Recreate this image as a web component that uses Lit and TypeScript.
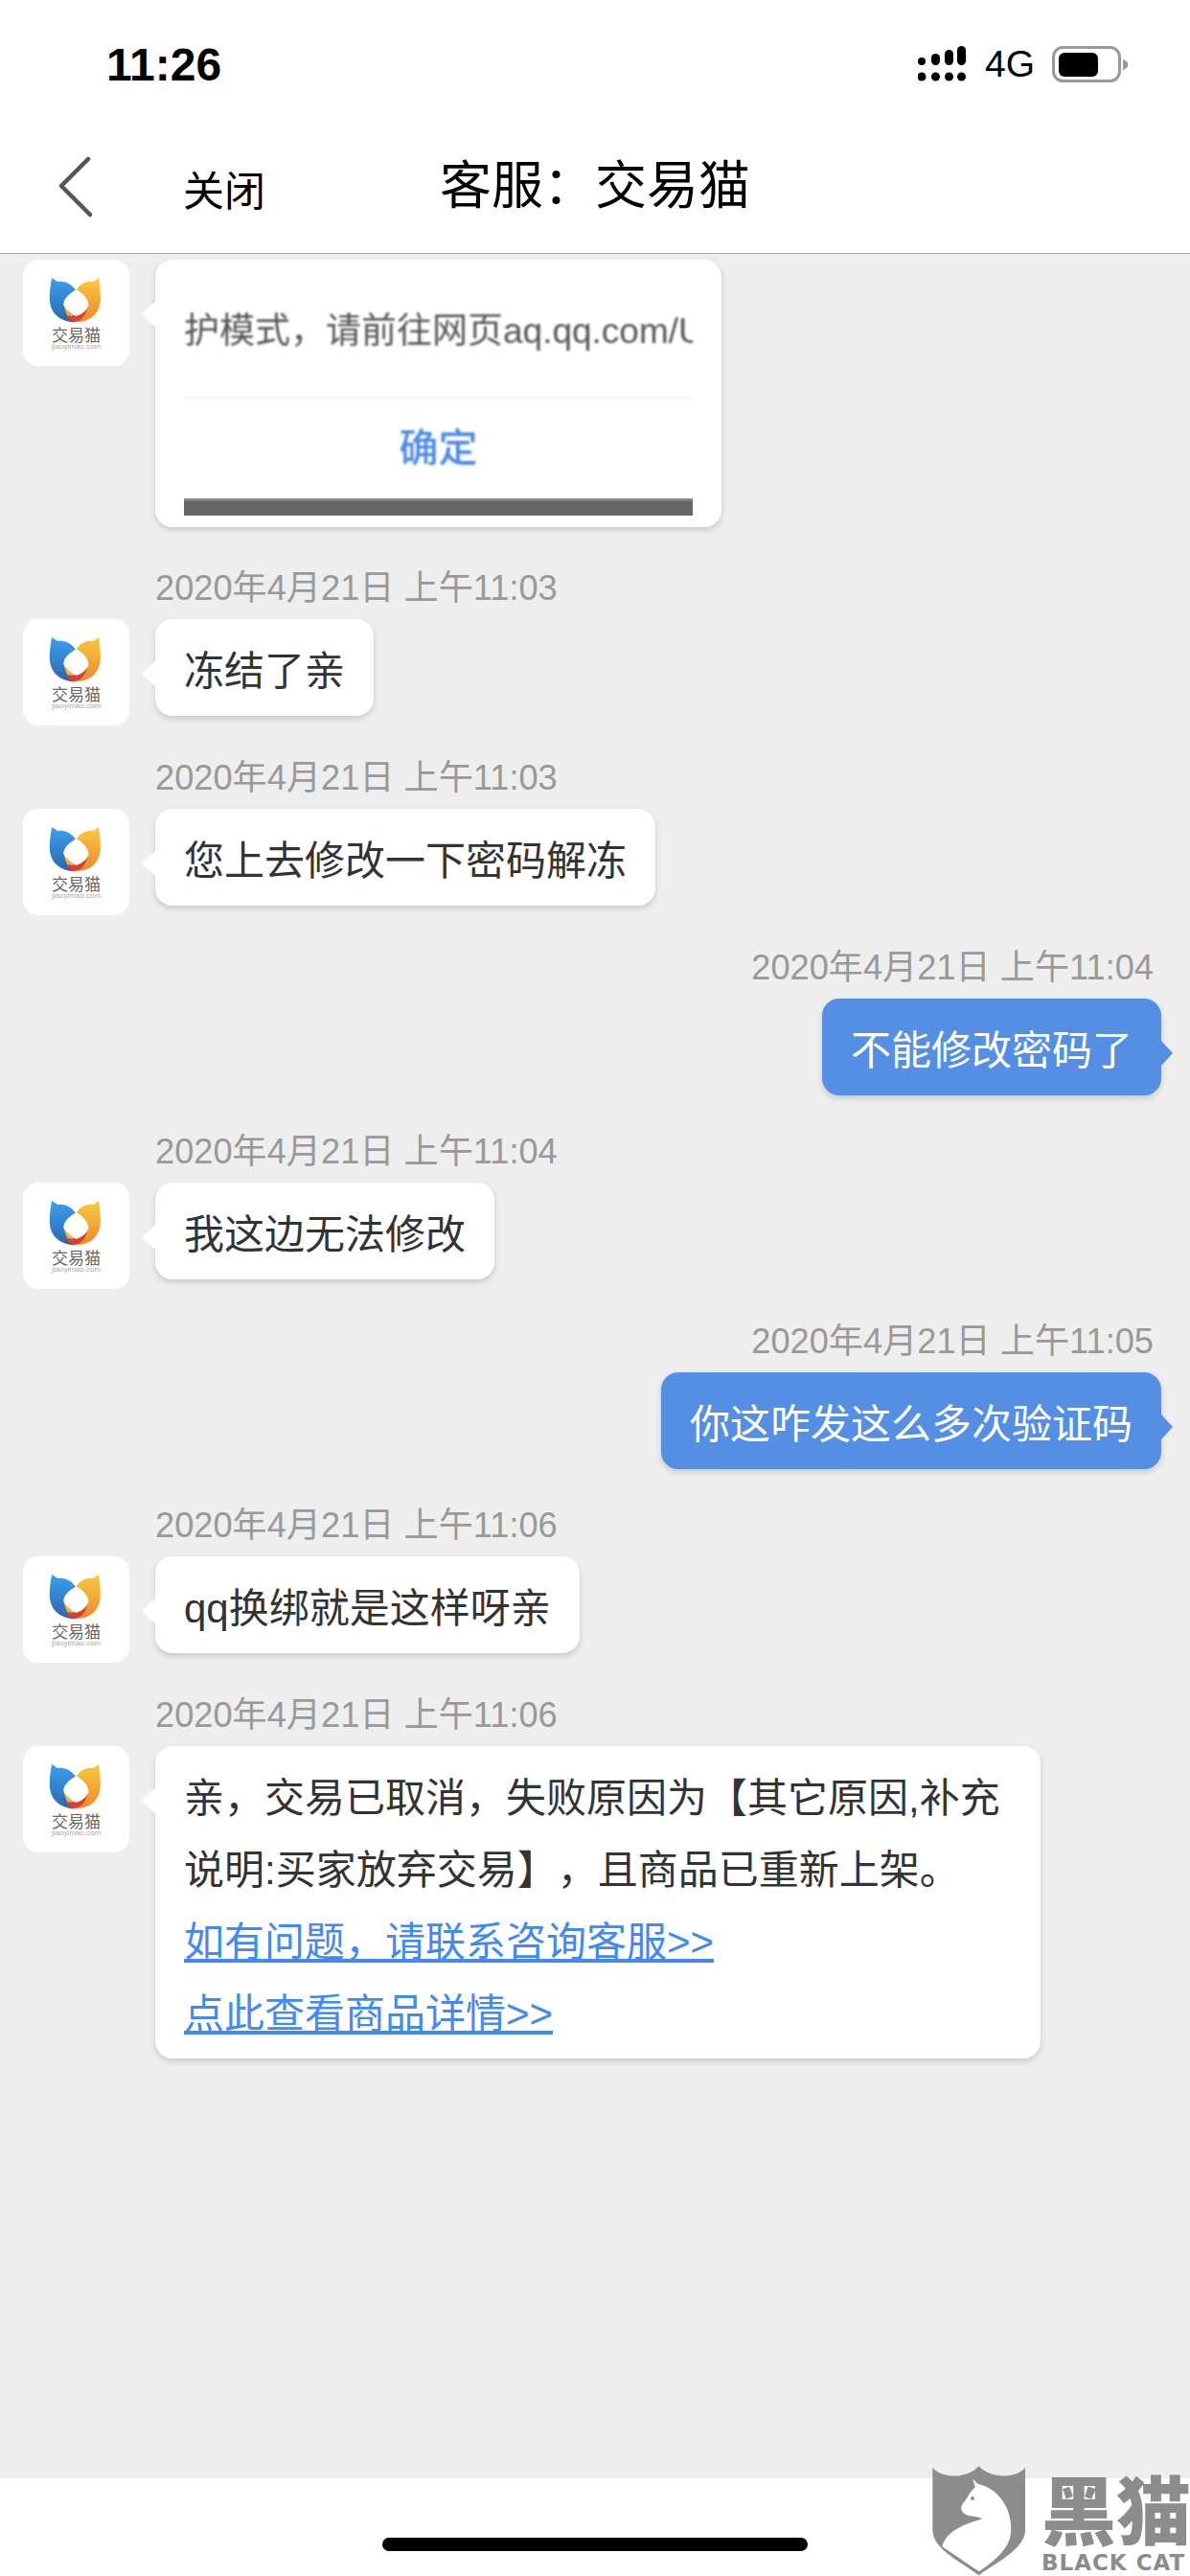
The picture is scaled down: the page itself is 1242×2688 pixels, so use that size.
import { LitElement, css, html } from "lit"
import { customElement } from "lit/decorators.js"

type Msg = { time: string; text: string; mine?: boolean }

const messages: Msg[] = [
  { time: "2020年4月21日 上午11:03", text: "冻结了亲" },
  { time: "2020年4月21日 上午11:03", text: "您上去修改一下密码解冻" },
  { time: "2020年4月21日 上午11:04", text: "不能修改密码了", mine: true },
  { time: "2020年4月21日 上午11:04", text: "我这边无法修改" },
  { time: "2020年4月21日 上午11:05", text: "你这咋发这么多次验证码", mine: true },
  { time: "2020年4月21日 上午11:06", text: "qq换绑就是这样呀亲" },
]

const avatar = html`
  <div class="avatar">
    <svg class="logo" viewBox="0 0 240 172">
      <defs>
        <linearGradient id="lb" x1="0" y1="0" x2="0" y2="1">
          <stop offset="0" stop-color="#3c9ff0" />
          <stop offset="1" stop-color="#2a68ad" />
        </linearGradient>
        <linearGradient id="ly" x1="0" y1="0" x2="0" y2="1">
          <stop offset="0" stop-color="#f8c93f" />
          <stop offset="1" stop-color="#ee8a2c" />
        </linearGradient>
      </defs>
      <path fill="url(#lb)" d="M42 30L60 42C80 38 102 48 117 68C104 76 88 86 80 104C82 130 100 150 118 168C76 172 35 146 35 95C35 70 38 50 42 30Z" />
      <path fill="url(#ly)" d="M190 30L172 42C150 38 130 50 119 68C136 76 150 90 156 106C156 130 136 152 118 168C160 172 195 142 195 95C195 70 192 50 190 30Z" />
      <path fill="#f2b431" d="M80 112L112 146L92 150C86 140 80 126 80 112Z" />
      <path fill="#d8402f" d="M156 116C152 142 136 168 112 169C100 168 92 160 88 150C116 152 140 138 156 116Z" />
      <path fill="#7b3f9f" d="M72 146C84 160 98 166 114 169C100 172 84 162 72 146Z" />
      <path fill="#fff" d="M118 82C128 94 158 98 158 116C152 134 130 150 116 150C104 142 82 128 78 112C82 96 108 94 118 82Z" />
    </svg>
    <span class="logo-name">交易猫</span>
    <span class="logo-url">jiaoyimao.com</span>
  </div>
`

@customElement("app-root")
export class AppRoot extends LitElement {
  render() {
    return html`
      <div class="status">
        <span class="clock">11:26</span>
        <div class="status-icons">
          <svg width="50" height="38" viewBox="0 0 50 38" fill="#000">
            <rect x="0" y="12" width="8" height="8" rx="4" />
            <rect x="14" y="8" width="9" height="12" rx="4.5" />
            <rect x="28" y="4" width="9" height="16" rx="4.5" />
            <rect x="41" y="0" width="9" height="20" rx="4.5" />
            <circle cx="4" cy="32" r="4.5" />
            <circle cx="18.5" cy="32" r="4.5" />
            <circle cx="32.5" cy="32" r="4.5" />
            <circle cx="45.5" cy="32" r="4.5" />
          </svg>
          <span class="net">4G</span>
          <svg width="80" height="38" viewBox="0 0 80 38">
            <rect x="1.5" y="1.5" width="69" height="35" rx="10" fill="none" stroke="#999" stroke-width="3" />
            <rect x="7" y="7" width="41" height="25" rx="6" fill="#000" />
            <path d="M74 13.5L79 17V22L74 25.5Z" fill="#999" />
          </svg>
        </div>
      </div>

      <div class="nav">
        <div class="nav-left">
          <svg class="back" width="36" height="66" viewBox="0 0 36 66">
            <path d="M32 3L4 31L34 61" fill="none" stroke="#4f5561" stroke-width="4.5" stroke-linecap="round" stroke-linejoin="round" />
          </svg>
          <span class="close">关闭</span>
        </div>
        <div class="title">客服：交易猫</div>
      </div>

      <div class="chat">
        <div class="row first">
          ${avatar}
          <div class="bubble shot">
            <div class="shot-text">护模式，请前往网页<span class="shot-latin">aq.qq.com/U</span></div>
            <div class="shot-btn">确定</div>
            <div class="shot-bar"></div>
          </div>
        </div>

        ${messages.map(
          (m) => html`
            <div class="time ${m.mine ? "right" : ""}">${m.time}</div>
            ${m.mine
              ? html`<div class="row mine"><div class="bubble blue">${m.text}</div></div>`
              : html`<div class="row">${avatar}<div class="bubble">${m.text}</div></div>`}
          `,
        )}

        <div class="time">2020年4月21日 上午11:06</div>
        <div class="row">
          ${avatar}
          <div class="bubble wide">
            亲，交易已取消，失败原因为【其它原因,补充说明:买家放弃交易】，且商品已重新上架。<br />
            <a>如有问题，请联系咨询客服&gt;&gt;</a><br />
            <a>点此查看商品详情&gt;&gt;</a>
          </div>
        </div>
      </div>

      <div class="home"><div class="home-bar"></div></div>

      <div class="mark">
        <svg width="120" height="128" viewBox="0 0 360 384">
          <path fill="#8c8c8c" d="M40 45C70 80 150 80 185 40C220 80 300 80 330 45V240C330 300 240 340 185 382C130 340 40 300 40 240Z" />
          <path fill="#fff" d="M165 80L182 96C250 110 292 180 285 250C280 300 230 340 186 370L70 292C80 250 125 225 196 205C180 196 150 198 138 188C128 180 128 165 134 158C148 145 155 120 174 106Z" />
          <circle cx="165" cy="141" r="6" fill="#8c8c8c" />
        </svg>
        <div class="mark-text">
          <div class="mark-cn">黑猫</div>
          <div class="mark-en">BLACK CAT</div>
        </div>
      </div>
    `
  }

  static styles = css`
    :host {
      display: flex;
      flex-direction: column;
      position: relative;
      width: 1242px;
      height: 2688px;
      overflow: hidden;
      background: #fff;
      font-family: "Liberation Sans", "Noto Sans CJK SC", sans-serif;
      text-spacing-trim: space-all;
      color: #333;
    }
    .status {
      height: 135px;
      display: flex;
      justify-content: space-between;
      align-items: flex-start;
      padding: 44px 64px 0 111px;
      box-sizing: border-box;
    }
    .clock {
      font-size: 48px;
      line-height: 48px;
      font-weight: 700;
      color: #000;
    }
    .status-icons {
      display: flex;
      align-items: center;
      margin-top: 4px;
    }
    .net {
      font-size: 39px;
      line-height: 38px;
      color: #000;
      margin: 0 18px 0 20px;
    }
    .nav {
      height: 130px;
      box-sizing: border-box;
      border-bottom: 1px solid #aaa;
      display: grid;
      grid-template-columns: 1fr auto 1fr;
      align-items: center;
    }
    .nav-left {
      display: flex;
      align-items: center;
      padding-left: 60px;
    }
    .back {
      margin-bottom: 8px;
    }
    .close {
      font-size: 43px;
      line-height: 50px;
      color: #000;
      margin-left: 95px;
    }
    .title {
      font-size: 54px;
      line-height: 60px;
      color: #000;
      margin-bottom: 12px;
    }
    .chat {
      flex: 1;
      background: #eee;
      padding: 6px 18px 0 24px;
    }
    .row {
      display: flex;
      align-items: flex-start;
      gap: 27px;
      margin-bottom: 30px;
    }
    .row.first {
      margin-bottom: 39px;
    }
    .row.mine {
      justify-content: flex-end;
      min-height: 105px;
      padding-right: 12px;
    }
    .time {
      font-size: 36.2px;
      line-height: 50px;
      color: #999;
      margin: 0 0 7px 138px;
    }
    .time.right {
      text-align: right;
      margin-right: 20px;
    }
    .avatar {
      flex: none;
      width: 111px;
      height: 111px;
      border-radius: 16px;
      background: #fff;
      display: flex;
      flex-direction: column;
      align-items: center;
    }
    .logo {
      width: 80px;
      height: 57px;
      margin-top: 9px;
    }
    .logo-name {
      font-size: 17px;
      line-height: 20px;
      color: #666;
      margin-top: 4px;
    }
    .logo-url {
      font-size: 8px;
      line-height: 8px;
      margin-top: -3px;
      color: #aaa;
    }
    .bubble {
      position: relative;
      background: #fff;
      border-radius: 18px;
      box-shadow: 0 3px 6px rgba(0, 0, 0, 0.16);
      padding: 17px 30px 9px;
      font-size: 42px;
      line-height: 75px;
      color: #333;
    }
    .bubble::before {
      content: "";
      position: absolute;
      top: 44px;
      left: -14px;
      border-style: solid;
      border-width: 13px 14px 13px 0;
      border-color: transparent #fff transparent transparent;
    }
    .bubble.blue {
      background: #558fe3;
      color: #fff;
    }
    .bubble.blue::before {
      left: auto;
      right: -12px;
      border-width: 13px 0 13px 12px;
      border-color: transparent transparent transparent #558fe3;
    }
    .bubble.wide {
      width: 864px;
    }
    .bubble a {
      color: #4389f2;
      text-decoration: underline;
      text-underline-offset: 3px;
    }
    .bubble.shot {
      width: 531px;
      padding: 0 30px 12px;
      display: flex;
      flex-direction: column;
      height: 267px;
    }
    .shot-text {
      height: 145px;
      box-sizing: border-box;
      padding-top: 51px;
      font-size: 37px;
      line-height: 48px;
      color: #555;
      white-space: nowrap;
      overflow: hidden;
      border-bottom: 2px solid #f2f2f2;
      filter: blur(1px);
    }
    .shot-btn {
      flex: 1;
      display: flex;
      align-items: center;
      justify-content: center;
      font-size: 41px;
      font-weight: 500;
      color: #4a8ae6;
      filter: blur(0.8px);
    }
    .shot-bar {
      height: 18px;
      background: linear-gradient(#999, #666 4px);
    }
    .home {
      height: 102px;
      flex: none;
      background: #fff;
      display: flex;
      justify-content: center;
      padding-top: 62px;
      box-sizing: border-box;
    }
    .home-bar {
      width: 444px;
      height: 14px;
      border-radius: 7px;
      background: #000;
    }
    .mark {
      position: absolute;
      left: 960px;
      top: 2560px;
      display: flex;
      gap: 7px;
    }
    .mark-cn {
      font-size: 78px;
      line-height: 78px;
      font-weight: 900;
      color: #8c8c8c;
      margin-top: 24px;
      white-space: nowrap;
    }
    .mark-en {
      font-family: "DejaVu Sans", sans-serif;
      font-size: 23px;
      line-height: 24px;
      font-weight: 700;
      letter-spacing: 1px;
      color: #8c8c8c;
      white-space: nowrap;
    }
  `
}

declare global {
  interface HTMLElementTagNameMap {
    "app-root": AppRoot
  }
}
